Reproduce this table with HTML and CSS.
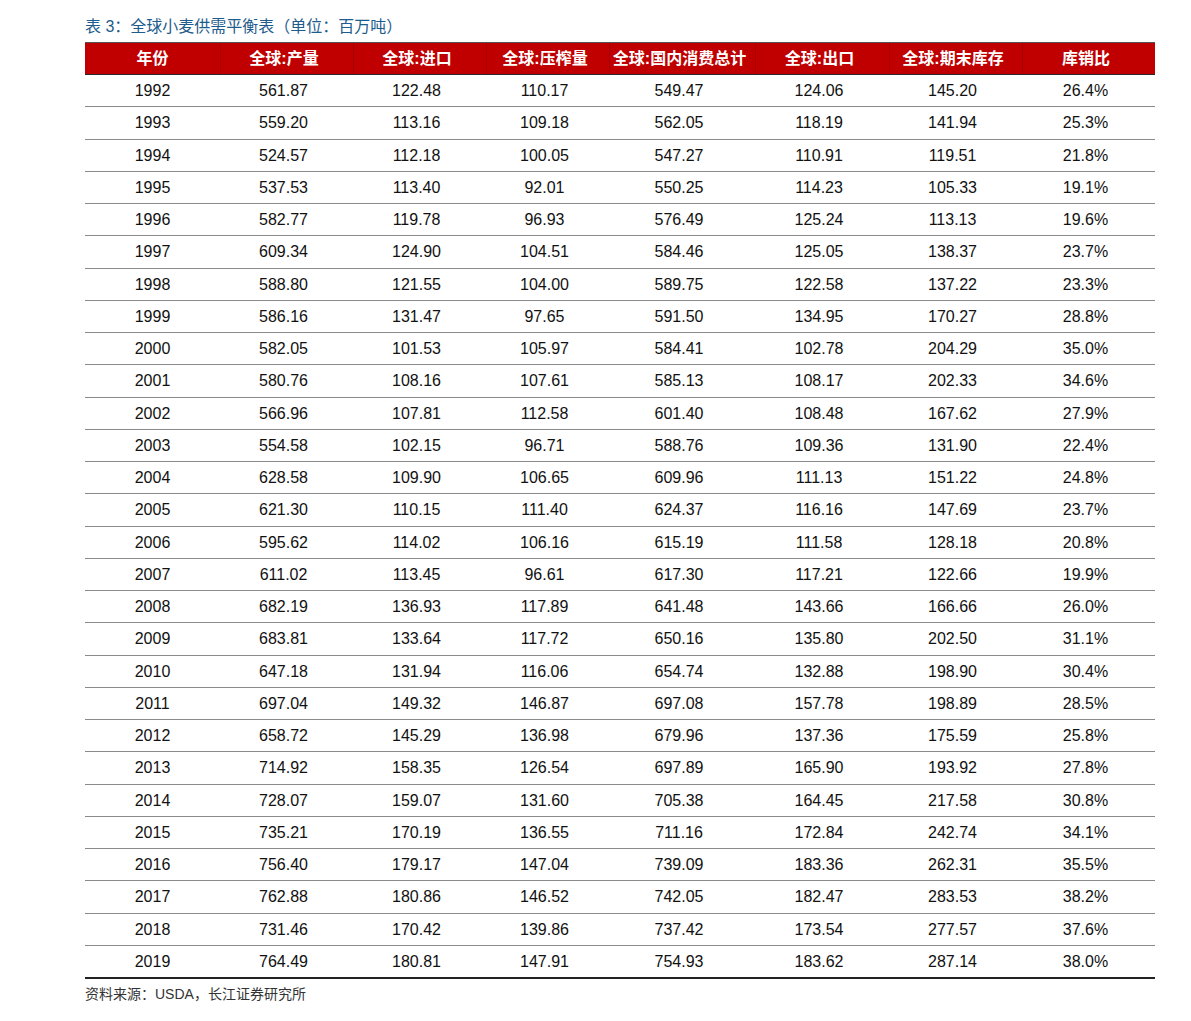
FILE: index.html
```html
<!DOCTYPE html>
<html lang="zh">
<head>
<meta charset="utf-8">
<title>全球小麦供需平衡表</title>
<link rel="stylesheet" href="styles.css">
</head>
<body>
<div class="wrap">
  <div class="title">表 3：全球小麦供需平衡表（单位：百万吨）</div>
  <div class="table">
    <div class="row head">
      <div>年份</div><div>全球:产量</div><div>全球:进口</div><div>全球:压榨量</div><div>全球:国内消费总计</div><div>全球:出口</div><div>全球:期末库存</div><div>库销比</div>
    </div>
    <div class="row"><div>1992</div><div>561.87</div><div>122.48</div><div>110.17</div><div>549.47</div><div>124.06</div><div>145.20</div><div>26.4%</div></div>
    <div class="row"><div>1993</div><div>559.20</div><div>113.16</div><div>109.18</div><div>562.05</div><div>118.19</div><div>141.94</div><div>25.3%</div></div>
    <div class="row"><div>1994</div><div>524.57</div><div>112.18</div><div>100.05</div><div>547.27</div><div>110.91</div><div>119.51</div><div>21.8%</div></div>
    <div class="row"><div>1995</div><div>537.53</div><div>113.40</div><div>92.01</div><div>550.25</div><div>114.23</div><div>105.33</div><div>19.1%</div></div>
    <div class="row"><div>1996</div><div>582.77</div><div>119.78</div><div>96.93</div><div>576.49</div><div>125.24</div><div>113.13</div><div>19.6%</div></div>
    <div class="row"><div>1997</div><div>609.34</div><div>124.90</div><div>104.51</div><div>584.46</div><div>125.05</div><div>138.37</div><div>23.7%</div></div>
    <div class="row"><div>1998</div><div>588.80</div><div>121.55</div><div>104.00</div><div>589.75</div><div>122.58</div><div>137.22</div><div>23.3%</div></div>
    <div class="row"><div>1999</div><div>586.16</div><div>131.47</div><div>97.65</div><div>591.50</div><div>134.95</div><div>170.27</div><div>28.8%</div></div>
    <div class="row"><div>2000</div><div>582.05</div><div>101.53</div><div>105.97</div><div>584.41</div><div>102.78</div><div>204.29</div><div>35.0%</div></div>
    <div class="row"><div>2001</div><div>580.76</div><div>108.16</div><div>107.61</div><div>585.13</div><div>108.17</div><div>202.33</div><div>34.6%</div></div>
    <div class="row"><div>2002</div><div>566.96</div><div>107.81</div><div>112.58</div><div>601.40</div><div>108.48</div><div>167.62</div><div>27.9%</div></div>
    <div class="row"><div>2003</div><div>554.58</div><div>102.15</div><div>96.71</div><div>588.76</div><div>109.36</div><div>131.90</div><div>22.4%</div></div>
    <div class="row"><div>2004</div><div>628.58</div><div>109.90</div><div>106.65</div><div>609.96</div><div>111.13</div><div>151.22</div><div>24.8%</div></div>
    <div class="row"><div>2005</div><div>621.30</div><div>110.15</div><div>111.40</div><div>624.37</div><div>116.16</div><div>147.69</div><div>23.7%</div></div>
    <div class="row"><div>2006</div><div>595.62</div><div>114.02</div><div>106.16</div><div>615.19</div><div>111.58</div><div>128.18</div><div>20.8%</div></div>
    <div class="row"><div>2007</div><div>611.02</div><div>113.45</div><div>96.61</div><div>617.30</div><div>117.21</div><div>122.66</div><div>19.9%</div></div>
    <div class="row"><div>2008</div><div>682.19</div><div>136.93</div><div>117.89</div><div>641.48</div><div>143.66</div><div>166.66</div><div>26.0%</div></div>
    <div class="row"><div>2009</div><div>683.81</div><div>133.64</div><div>117.72</div><div>650.16</div><div>135.80</div><div>202.50</div><div>31.1%</div></div>
    <div class="row"><div>2010</div><div>647.18</div><div>131.94</div><div>116.06</div><div>654.74</div><div>132.88</div><div>198.90</div><div>30.4%</div></div>
    <div class="row"><div>2011</div><div>697.04</div><div>149.32</div><div>146.87</div><div>697.08</div><div>157.78</div><div>198.89</div><div>28.5%</div></div>
    <div class="row"><div>2012</div><div>658.72</div><div>145.29</div><div>136.98</div><div>679.96</div><div>137.36</div><div>175.59</div><div>25.8%</div></div>
    <div class="row"><div>2013</div><div>714.92</div><div>158.35</div><div>126.54</div><div>697.89</div><div>165.90</div><div>193.92</div><div>27.8%</div></div>
    <div class="row"><div>2014</div><div>728.07</div><div>159.07</div><div>131.60</div><div>705.38</div><div>164.45</div><div>217.58</div><div>30.8%</div></div>
    <div class="row"><div>2015</div><div>735.21</div><div>170.19</div><div>136.55</div><div>711.16</div><div>172.84</div><div>242.74</div><div>34.1%</div></div>
    <div class="row"><div>2016</div><div>756.40</div><div>179.17</div><div>147.04</div><div>739.09</div><div>183.36</div><div>262.31</div><div>35.5%</div></div>
    <div class="row"><div>2017</div><div>762.88</div><div>180.86</div><div>146.52</div><div>742.05</div><div>182.47</div><div>283.53</div><div>38.2%</div></div>
    <div class="row"><div>2018</div><div>731.46</div><div>170.42</div><div>139.86</div><div>737.42</div><div>173.54</div><div>277.57</div><div>37.6%</div></div>
    <div class="row last"><div>2019</div><div>764.49</div><div>180.81</div><div>147.91</div><div>754.93</div><div>183.62</div><div>287.14</div><div>38.0%</div></div>
  </div>
  <div class="source">资料来源：USDA，长江证券研究所</div>
</div>
</body>
</html>
```
FILE: styles.css
```css
html, body {
  margin: 0;
  padding: 0;
  background: #ffffff;
}
body {
  font-family: "Liberation Sans", "Noto Sans CJK SC", sans-serif;
  color: #111;
}
.wrap {
  padding-left: 85px;
  width: 1070px;
}
.title {
  padding-top: 18px;
  line-height: 18px;
  height: 18px;
  margin-bottom: 6px;
  font-size: 16px;
  color: #1d5c8c;
}
.table {
  width: 1070px;
}
.row {
  display: grid;
  grid-template-columns: 135px 133px 133px 123px 146px 134px 133px 133px;
  height: 32.25px;
  box-sizing: border-box;
  border-bottom: 1px solid #8a8a8a;
  font-size: 16px;
}
.row > div {
  text-align: center;
  line-height: 32px;
  padding-right: 6px;
}
.row > div:first-child {
  padding-right: 0;
}
.row.head {
  height: 33px;
  background: #c00000;
  color: #ffffff;
  font-weight: bold;
  font-size: 16px;
  border-top: 1px solid #555;
  border-bottom: 1px solid #2a2a2a;
}
.row.head > div {
  line-height: 31px;
  border-left: 1px solid #a80000;
}
.row.head > div:first-child {
  border-left: none;
}
.row.last {
  height: 33px;
  border-bottom: 2px solid #222;
}
.source {
  margin-top: 7px;
  font-size: 14px;
  line-height: 16px;
  color: #333;
}
```
